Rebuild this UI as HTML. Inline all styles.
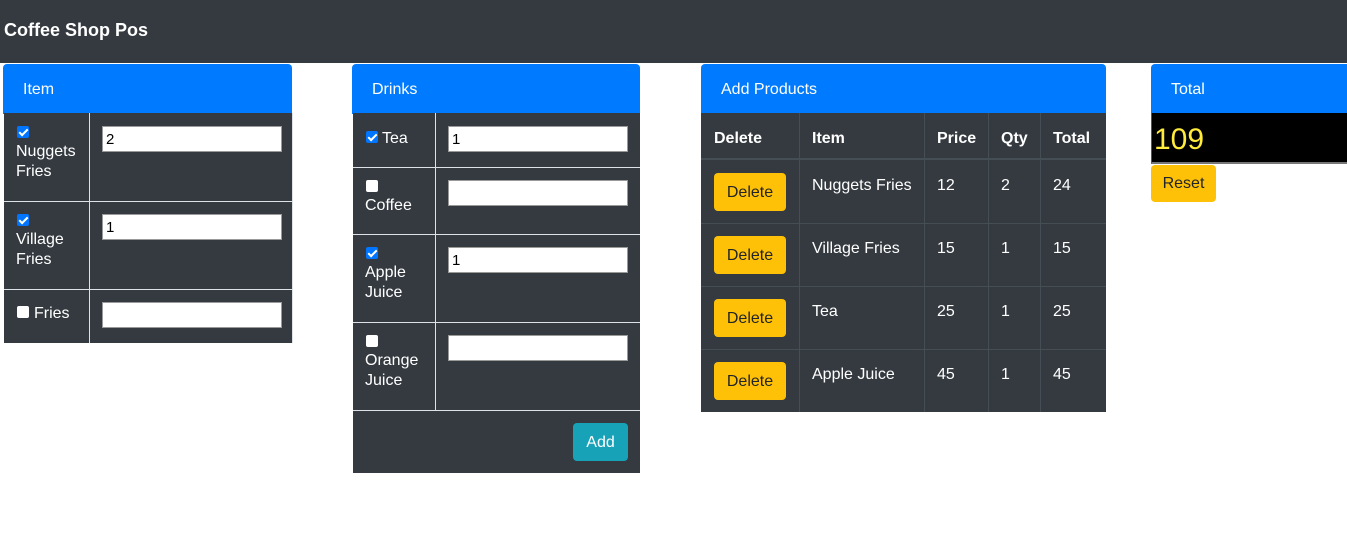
<!DOCTYPE html>
<html><head><meta charset="utf-8"><style>
*{margin:0;padding:0;box-sizing:border-box}
body{width:1347px;height:548px;background:#fff;font-family:"Liberation Sans",sans-serif;font-size:16px;position:relative;overflow:hidden;color:#fff}
div,span{position:absolute}
.nav{left:0;top:0;width:1347px;height:63px;background:#343a40}
.hd{background:#007bff;height:50px;border-radius:4px 4px 0 0;top:64px;color:#fff;line-height:52px;padding-left:20px}
.dk{background:#343a40}
.vl{width:1px;background:#dee2e6}
.hl{height:1px;background:#dee2e6}
.vg{width:1px;background:#454d55}
.hg{height:1px;background:#454d55}
.in{background:#fff;height:26px;border:1px solid #999;color:#000;line-height:26px;padding-left:3px;font-size:15px}
.cb{width:12px;height:12px;background:#fff;border-radius:2px}
.cb.on{background:#0075ff}
.cb.on:after{content:"";position:absolute;left:4px;top:1px;width:3px;height:7px;border:solid #fff;border-width:0 2px 2px 0;transform:rotate(45deg)}
.tx{line-height:20px;white-space:nowrap;margin-top:1px}
.btn{background:#ffc107;color:#212529;border-radius:4px;text-align:center;line-height:40px}
.b{font-weight:bold}
</style></head><body>
<div class="nav"></div>
<div class="tx b" style="left:4px;top:17px;font-size:18px;line-height:24px">Coffee Shop Pos</div>

<!-- Item -->
<div class="hd" style="left:3px;width:289px">Item</div>
<div class="dk" style="left:4px;top:113px;width:288px;height:230px"></div>
<div class="vl" style="left:89px;top:113px;height:230px"></div>
<div class="hl" style="left:4px;top:201px;width:288px"></div>
<div class="hl" style="left:4px;top:289px;width:288px"></div>
<div class="vl" style="left:292px;top:113px;height:230px"></div>
<div class="cb on" style="left:17px;top:126px"></div>
<div class="tx" style="left:16px;top:141px">Nuggets<br>Fries</div>
<div class="in" style="left:102px;top:126px;width:180px">2</div>
<div class="cb on" style="left:17px;top:214px"></div>
<div class="tx" style="left:16px;top:229px">Village<br>Fries</div>
<div class="in" style="left:102px;top:214px;width:180px">1</div>
<div class="cb" style="left:17px;top:306px"></div>
<div class="tx" style="left:34px;top:303px">Fries</div>
<div class="in" style="left:102px;top:302px;width:180px"></div>

<!-- Drinks -->
<div class="hd" style="left:352px;width:288px">Drinks</div>
<div class="dk" style="left:353px;top:113px;width:287px;height:360px"></div>
<div class="vl" style="left:435px;top:113px;height:297px"></div>
<div class="hl" style="left:353px;top:167px;width:287px"></div>
<div class="hl" style="left:353px;top:234px;width:287px"></div>
<div class="hl" style="left:353px;top:322px;width:287px"></div>
<div class="hl" style="left:353px;top:410px;width:287px"></div>
<div class="cb on" style="left:366px;top:131px"></div>
<div class="tx" style="left:382px;top:128px">Tea</div>
<div class="in" style="left:448px;top:126px;width:180px">1</div>
<div class="cb" style="left:366px;top:180px"></div>
<div class="tx" style="left:365px;top:195px">Coffee</div>
<div class="in" style="left:448px;top:180px;width:180px"></div>
<div class="cb on" style="left:366px;top:247px"></div>
<div class="tx" style="left:365px;top:262px">Apple<br>Juice</div>
<div class="in" style="left:448px;top:247px;width:180px">1</div>
<div class="cb" style="left:366px;top:335px"></div>
<div class="tx" style="left:365px;top:350px">Orange<br>Juice</div>
<div class="in" style="left:448px;top:335px;width:180px"></div>
<div style="left:573px;top:423px;width:55px;height:38px;background:#17a2b8;border-radius:4px;line-height:40px;text-align:center">Add</div>

<!-- Add Products -->
<div class="hd" style="left:701px;width:405px">Add Products</div>
<div class="dk" style="left:701px;top:113px;width:405px;height:299px"></div>
<div class="vg" style="left:799px;top:113px;height:299px"></div>
<div class="vg" style="left:924px;top:113px;height:299px"></div>
<div class="vg" style="left:988px;top:113px;height:299px"></div>
<div class="vg" style="left:1040px;top:113px;height:299px"></div>
<div class="hg" style="left:701px;top:158px;width:405px;height:2px"></div>
<div class="hg" style="left:701px;top:223px;width:405px"></div>
<div class="hg" style="left:701px;top:286px;width:405px"></div>
<div class="hg" style="left:701px;top:349px;width:405px"></div>
<div class="tx b" style="left:714px;top:128px">Delete</div>
<div class="tx b" style="left:812px;top:128px">Item</div>
<div class="tx b" style="left:937px;top:128px">Price</div>
<div class="tx b" style="left:1001px;top:128px">Qty</div>
<div class="tx b" style="left:1053px;top:128px">Total</div>

<div class="btn" style="left:714px;top:173px;width:72px;height:38px">Delete</div>
<div class="tx" style="left:812px;top:175px">Nuggets Fries</div>
<div class="tx" style="left:937px;top:175px">12</div>
<div class="tx" style="left:1001px;top:175px">2</div>
<div class="tx" style="left:1053px;top:175px">24</div>

<div class="btn" style="left:714px;top:236px;width:72px;height:38px">Delete</div>
<div class="tx" style="left:812px;top:238px">Village Fries</div>
<div class="tx" style="left:937px;top:238px">15</div>
<div class="tx" style="left:1001px;top:238px">1</div>
<div class="tx" style="left:1053px;top:238px">15</div>

<div class="btn" style="left:714px;top:299px;width:72px;height:38px">Delete</div>
<div class="tx" style="left:812px;top:301px">Tea</div>
<div class="tx" style="left:937px;top:301px">25</div>
<div class="tx" style="left:1001px;top:301px">1</div>
<div class="tx" style="left:1053px;top:301px">25</div>

<div class="btn" style="left:714px;top:362px;width:72px;height:38px">Delete</div>
<div class="tx" style="left:812px;top:364px">Apple Juice</div>
<div class="tx" style="left:937px;top:364px">45</div>
<div class="tx" style="left:1001px;top:364px">1</div>
<div class="tx" style="left:1053px;top:364px">45</div>

<!-- Total -->
<div class="hd" style="left:1151px;width:200px">Total</div>
<div style="left:1151px;top:113px;width:200px;height:51px;background:#000;border-bottom:2px solid #777;border-left:1px solid #555"></div>
<div class="tx" style="left:1154px;top:121px;font-size:30px;line-height:36px;color:#ffeb3b">109</div>
<div class="btn" style="left:1151px;top:165px;width:65px;height:37px;line-height:38px">Reset</div>
</body></html>
